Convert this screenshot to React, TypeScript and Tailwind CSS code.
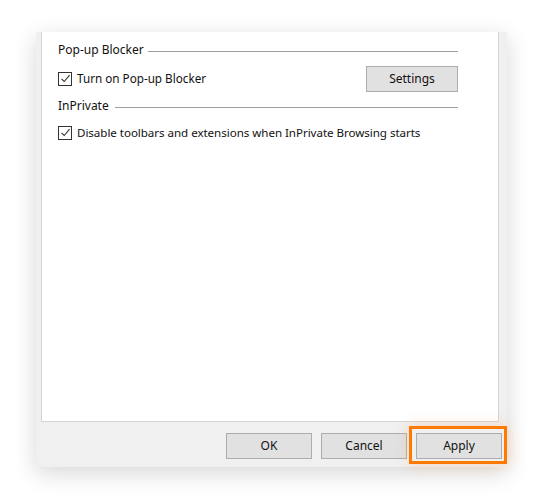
import React from 'react';

const font = { fontFamily: '"Noto Sans", "Open Sans", sans-serif' };

const Check: React.FC = () => (
  <span className="flex h-[14px] w-[14px] items-center justify-center border border-[#333] bg-white">
    <svg width="11" height="11" viewBox="0 0 11 11" fill="none">
      <path d="M1.5 5.8 L4.2 8.5 L9.6 2.2" stroke="#333" strokeWidth="1.1" />
    </svg>
  </span>
);

const Btn: React.FC<{ label: string; className?: string }> = ({ label, className = '' }) => (
  <button
    className={`h-[26px] w-[86px] border border-[#adadad] bg-[#e1e1e1] text-[12px] text-[#111] ${className}`}
  >
    {label}
  </button>
);

const Group: React.FC<{ title: string; gap: string }> = ({ title, gap }) => (
  <div className="flex items-center">
    <span className="text-[12px] text-[#111]">{title}</span>
    <span className={`mt-[2px] h-px flex-1 bg-[#a0a0a0] ${gap}`} />
  </div>
);

const App: React.FC = () => {
  return (
    <div className="h-[499px] w-[544px] overflow-hidden bg-white" style={font}>
      <div className="ml-[36px] mt-[32px] flex h-[435px] w-[471px] flex-col bg-[#f0f0f0] shadow-[0_6px_22px_rgba(0,0,0,0.16)]">
        <div className="ml-[5px] mr-[8px] h-[390px] border-x border-b border-[#d5d5d5] bg-white pl-[16px] pr-[40px] pt-[9px]">
          <Group title="Pop-up Blocker" gap="ml-[4px]" />
          <div className="mt-[7px] flex items-center justify-between">
            <label className="flex items-center gap-[5px] text-[11.7px] text-[#111]">
              <Check />
              Turn on Pop-up Blocker
            </label>
            <Btn label="Settings" className="w-[92px]" />
          </div>
          <div className="mt-[5px]">
            <Group title="InPrivate" gap="ml-[6px]" />
          </div>
          <label className="mt-[9px] flex items-center gap-[5px] text-[11.6px] tracking-[-0.05px] text-[#111]">
            <Check />
            Disable toolbars and extensions when InPrivate Browsing starts
          </label>
        </div>
        <div className="flex flex-1 items-center justify-end gap-[9px] pr-[5px] pt-[2px]">
          <Btn label="OK" />
          <Btn label="Cancel" />
          <div className="relative">
            <Btn label="Apply" />
            <div className="pointer-events-none absolute -bottom-[5px] -left-[7px] -right-[5px] -top-[6px] border-[3px] border-[#ff7a00] shadow-[0_0_14px_rgba(255,140,40,0.25)]" />
          </div>
        </div>
      </div>
    </div>
  );
};

export default App;
